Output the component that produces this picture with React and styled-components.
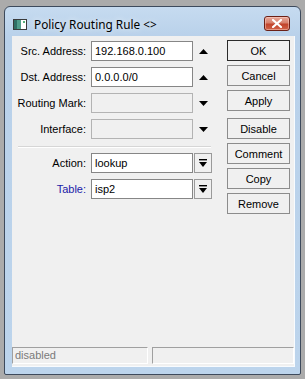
import React from 'react'
import styled, { createGlobalStyle } from 'styled-components';

const GlobalStyle = createGlobalStyle`
    html, body {
        margin: 0;
        padding: 0;
        background: #ababab;
        width: 305px;
        height: 379px;
        overflow: hidden;
    }
    * {
        box-sizing: border-box;
    }
`

const TextRow = ({ label, value, disabled, arrow, blue }) => (
    <Row>
        <Label blue={blue}>{label}</Label>
        <Field disabled={disabled}>{value}</Field>
        <ArrowSlot>
            <svg width="9" height="5" viewBox="0 0 9 5">
                {arrow === 'up'
                    ? <polygon points="0,5 9,5 4.5,0" fill="#000" />
                    : <polygon points="0,0 9,0 4.5,5" fill="#000" />}
            </svg>
        </ArrowSlot>
    </Row>
)

const ComboRow = ({ label, value, blue }) => (
    <Row>
        <Label blue={blue}>{label}</Label>
        <Field>{value}</Field>
        <DropButton>
            <svg width="8" height="8" viewBox="0 0 8 8">
                <rect x="0" y="0" width="8" height="1.4" fill="#000" />
                <polygon points="0,3 8,3 4,8" fill="#000" />
            </svg>
        </DropButton>
    </Row>
)

const App = () => {
    const buttons = ['OK', 'Cancel', 'Apply', 'Disable', 'Comment', 'Copy', 'Remove'];

    return (
        <>
            <GlobalStyle />
            <Window>
                <TitleBar>
                    <WinIcon>
                        <svg width="14" height="11" viewBox="0 0 14 11">
                            <rect x="0.5" y="0.5" width="13" height="10" fill="#fff" stroke="#3a3a3a" />
                            <rect x="1" y="1" width="7" height="9" fill="#4f9c8a" />
                            <rect x="1" y="1" width="3" height="9" fill="#2f6f66" />
                            <rect x="10" y="2" width="2" height="2" fill="#58b07a" />
                        </svg>
                    </WinIcon>
                    <Title>Policy Routing Rule &lt;&gt;</Title>
                    <CloseButton>
                        <svg width="10" height="9" viewBox="0 0 10 9">
                            <path d="M1 1 L9 8 M9 1 L1 8" stroke="#fff" strokeWidth="2.2" strokeLinecap="square" />
                        </svg>
                    </CloseButton>
                </TitleBar>
                <Client>
                    <Main>
                        <Form>
                            <Group>
                                <TextRow label="Src. Address:" value="192.168.0.100" arrow="up" />
                                <TextRow label="Dst. Address:" value="0.0.0.0/0" arrow="up" />
                                <TextRow label="Routing Mark:" disabled arrow="down" />
                                <TextRow label="Interface:" disabled arrow="down" />
                            </Group>
                            <Separator />
                            <Group>
                                <ComboRow label="Action:" value="lookup" />
                                <ComboRow label="Table:" value="isp2" blue />
                            </Group>
                        </Form>
                        <Buttons>
                            {buttons.map(b => (
                                <Button key={b} primary={b === 'OK'} spaced={b === 'Disable'}>{b}</Button>
                            ))}
                        </Buttons>
                    </Main>
                    <StatusBar>
                        <StatusField width="136px">disabled</StatusField>
                        <StatusField />
                    </StatusBar>
                </Client>
            </Window>
        </>
    )
}

export default App;

const Window = styled.div`
    margin: 6px 0 0 4px;
    width: 297px;
    height: 369px;
    border: 1px solid #3d4a5c;
    border-radius: 6px 6px 2px 2px;
    background: linear-gradient(to bottom, #c6dbf0 0px, #b9d1ea 30px, #bcd4ec 100%);
    display: flex;
    flex-direction: column;
    font-family: "Liberation Sans", Arial, sans-serif;
`

const TitleBar = styled.div`
    height: 29px;
    display: flex;
    align-items: flex-start;
    flex: none;
`

const WinIcon = styled.div`
    margin: 12px 0 0 8px;
    height: 11px;
    display: flex;
`

const Title = styled.div`
    margin: 9px 0 0 7px;
    font-family: "Noto Sans", "Open Sans", sans-serif;
    font-size: 11.8px;
    line-height: 16px;
    color: #000;
    text-shadow: 0 0 6px rgba(255, 255, 255, 0.9);
`

const CloseButton = styled.div`
    margin: 9px 10px 0 auto;
    width: 26px;
    height: 15px;
    border: 1px solid #6b2016;
    border-radius: 3px;
    background: linear-gradient(to bottom, #e9a99b 0%, #d7806c 45%, #c2432b 55%, #d0644a 100%);
    display: flex;
    align-items: center;
    justify-content: center;
    box-shadow: inset 0 0 0 1px rgba(255, 220, 210, 0.45);
`

const Client = styled.div`
    flex: 1;
    margin: 0 5px 7px 7px;
    background: #f0f0f0;
    display: flex;
    flex-direction: column;
    border-right: 1px solid #f8fbfe;
    border-bottom: 1px solid #f8fbfe;
`

const Main = styled.div`
    display: flex;
    padding-top: 4px;
`

const Form = styled.div`
    width: 215px;
    padding-top: 1px;
    display: flex;
    flex-direction: column;
`

const Group = styled.div`
    display: flex;
    flex-direction: column;
    gap: 6px;
`

const Row = styled.div`
    display: flex;
    align-items: center;
    height: 20px;
`

const Label = styled.div`
    width: 74px;
    text-align: right;
    font-size: 11px;
    color: ${props => props.blue ? '#1b1ba8' : '#000'};
    white-space: nowrap;
`

const Field = styled.div`
    margin-left: 5px;
    width: 102px;
    height: 20px;
    border: 1px solid ${props => props.disabled ? '#b3b3b3' : '#868686'};
    background: ${props => props.disabled ? '#f0f0f0' : '#fff'};
    font-size: 11px;
    line-height: 18px;
    padding-left: 3px;
    color: #000;
    white-space: nowrap;
    overflow: hidden;
`

const ArrowSlot = styled.div`
    width: 19px;
    display: flex;
    justify-content: center;
    padding-left: 1px;
`

const DropButton = styled.div`
    margin-left: 1px;
    width: 18px;
    height: 20px;
    border: 1px solid #9a9a9a;
    background: #f0f0f0;
    display: flex;
    align-items: center;
    justify-content: center;
`

const Separator = styled.div`
    margin: 7px 0 5px 6px;
    width: 193px;
    height: 2px;
    border-top: 1px solid #d6d6d6;
    border-bottom: 1px solid #fff;
`

const Buttons = styled.div`
    display: flex;
    flex-direction: column;
    gap: 4px;
`

const Button = styled.div`
    width: 63px;
    height: 21px;
    margin-top: ${props => props.spaced ? '3px' : '0'};
    border: 1px solid ${props => props.primary ? '#2b2b2b' : '#8c8c8c'};
    background: #f0f0f0;
    font-size: 11px;
    color: #000;
    display: flex;
    align-items: center;
    justify-content: center;
`

const StatusBar = styled.div`
    margin-top: auto;
    margin-bottom: 2px;
    height: 17px;
    display: flex;
    gap: 4px;
`

const StatusField = styled.div`
    width: ${props => props.width || 'auto'};
    flex: ${props => props.width ? 'none' : '1'};
    border-top: 1px solid #a0a0a0;
    border-left: 1px solid #a0a0a0;
    border-bottom: 1px solid #fff;
    border-right: 1px solid #fff;
    font-size: 11px;
    line-height: 15px;
    padding-left: 2px;
    color: #7a7a7a;
`
